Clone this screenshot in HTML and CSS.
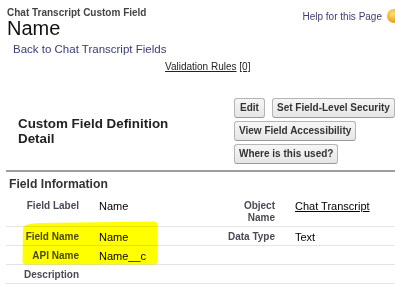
FILE: index.html
```
<!DOCTYPE html>
<html lang="en">
<head>
<meta charset="utf-8">
<title>Name - Chat Transcript Custom Field</title>
<link rel="stylesheet" href="styles.css">
</head>
<body>
<div class="page">
  <header class="page-head">
    <div class="titles">
      <div class="ptype">Chat Transcript Custom Field</div>
      <h1 class="pname">Name</h1>
    </div>
    <a class="help" href="#">Help for this Page <span class="help-icon"></span></a>
  </header>
  <div class="back"><a href="#">Back to Chat Transcript Fields</a></div>
  <div class="related"><a href="#">Validation Rules</a> <a href="#">[0]</a></div>

  <section class="block">
    <div class="block-head">
      <h2 class="block-title">Custom Field Definition Detail</h2>
      <div class="buttons">
        <button class="btn btn-edit">Edit</button>
        <button class="btn">Set Field-Level Security</button>
        <button class="btn">View Field Accessibility</button>
        <button class="btn">Where is this used?</button>
      </div>
    </div>
    <h3 class="sub">Field Information</h3>
    <div class="detail">
      <div class="row">
        <div class="label">Field Label</div>
        <div class="data">Name</div>
        <div class="label">Object Name</div>
        <div class="data"><a href="#">Chat Transcript</a></div>
      </div>
      <div class="row">
        <div class="label">Field Name</div>
        <div class="data">Name</div>
        <div class="label">Data Type</div>
        <div class="data">Text</div>
      </div>
      <div class="row">
        <div class="label">API Name</div>
        <div class="data">Name__c</div>
        <div class="label"></div>
        <div class="data"></div>
      </div>
      <div class="row">
        <div class="label">Description</div>
        <div class="data"></div>
        <div class="label"></div>
        <div class="data"></div>
      </div>
      <svg class="highlight" width="140" height="46" viewBox="0 0 140 46" aria-hidden="true">
        <path d="M3 8 Q4 3.5 20 3 L134 1.5 Q137.5 1.5 137.5 5 L137.5 41 Q137.5 44.5 134 44.5 L6 44.5 Q2.5 44.5 2.5 41 Z" fill="#ffff00"/>
      </svg>
    </div>
  </section>
</div>
</body>
</html>
```
FILE: styles.css
```
html, body {
  margin: 0;
  padding: 0;
  overflow: hidden;
  background: #ffffff;
}

body {
  font-family: "Liberation Sans", Arial, sans-serif;
  color: #000;
}

a {
  color: inherit;
}

.page {
  width: 410px;
}

/* Header */
.page-head {
  display: flex;
  justify-content: space-between;
  align-items: flex-start;
  padding-left: 7px;
}

.ptype {
  margin-top: 7px;
  font-size: 10px;
  line-height: 11px;
  font-weight: bold;
  color: #444;
}

.pname {
  margin: 0;
  font-size: 20px;
  line-height: 20px;
  font-weight: normal;
  color: #111;
}

.help {
  display: flex;
  align-items: center;
  gap: 5px;
  margin-top: 11px;
  margin-right: 9px;
  font-size: 10px;
  line-height: 12px;
  color: #3d3d73;
  text-decoration: none;
}

.help-icon {
  width: 14px;
  height: 14px;
  margin-top: -3px;
  border-radius: 50%;
  background: radial-gradient(circle at 40% 35%, #fbe08a 0%, #f0b52c 45%, #d98f0c 100%);
}

.back {
  margin: 5px 0 0 13px;
  font-size: 11.5px;
  line-height: 13px;
}

.back a {
  color: #3b3b72;
  text-decoration: none;
}

.related {
  margin-top: 5px;
  padding-left: 165px;
  font-size: 10px;
  line-height: 12px;
  color: #222;
}

.related a {
  color: #222;
  text-decoration: underline;
}

/* Detail block */
.block {
  margin: 25px 0 0 6px;
}

.block-head {
  display: flex;
  align-items: center;
  padding: 0 0 6px 12px;
  border-bottom: 2px solid #9d9d9d;
}

.block-title {
  flex: 0 0 216px;
  box-sizing: border-box;
  margin: 0;
  padding-right: 50px;
  font-size: 13.4px;
  line-height: 15px;
  font-weight: bold;
  color: #222;
}

.buttons {
  width: 162px;
  display: flex;
  flex-wrap: wrap;
  column-gap: 7px;
  row-gap: 3px;
}

.btn {
  box-sizing: border-box;
  height: 20px;
  margin: 0;
  padding: 3px 4px;
  font-family: "Liberation Sans", Arial, sans-serif;
  font-size: 10px;
  line-height: 12px;
  font-weight: bold;
  color: #333;
  white-space: nowrap;
  background: linear-gradient(#f6f6f6, #e6e6e6);
  border: 1px solid #b5b5b5;
  border-bottom-color: #9a9a9a;
  border-radius: 3px;
}

.btn-edit {
  min-width: 31px;
}

.sub {
  margin: 4.5px 0 0 3px;
  font-size: 12.2px;
  line-height: 14px;
  font-weight: bold;
  color: #333;
}

.detail {
  position: relative;
  margin-top: 5px;
}

.row {
  display: grid;
  grid-template-columns: 83px 130px 66px 1fr;
  border-bottom: 1px solid #e4e4e4;
}

.label,
.data {
  padding: 4px 0 2px;
  line-height: 12px;
}

.label {
  padding-left: 2px;
  padding-right: 10px;
  text-align: right;
  font-size: 10px;
  font-weight: bold;
  color: #4a4a56;
}

.data {
  padding-left: 10px;
  font-size: 11px;
  color: #000;
}

.data a {
  color: #000;
  text-decoration: underline;
}

.highlight {
  position: absolute;
  left: 14px;
  top: 24px;
  mix-blend-mode: multiply;
  filter: blur(0.5px);
  pointer-events: none;
}
```
